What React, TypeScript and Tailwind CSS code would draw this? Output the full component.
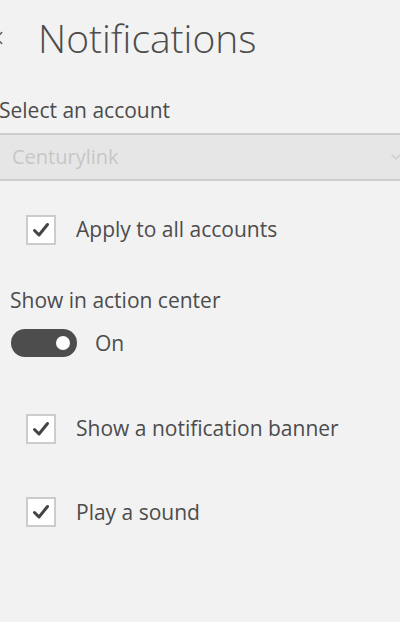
import { ChevronDown, ChevronLeft } from 'lucide-react';

function CheckRow({ label, className }: { label: string; className?: string }) {
  return (
    <div className={`flex items-center ${className ?? ''}`}>
      <div className="ml-[26px] flex h-[30px] w-[30px] items-center justify-center border-2 border-[#cccccc] bg-white">
        <svg viewBox="0 0 20 20" className="h-[20px] w-[20px]" fill="none">
          <path d="M3.5 10.5 L8 15 L16.5 4.5" stroke="#444444" strokeWidth="3" strokeLinecap="round" strokeLinejoin="round" />
        </svg>
      </div>
      <span className="ml-[20px] text-[21px] text-[#4c4c4c]">{label}</span>
    </div>
  );
}

export default function App() {
  return (
    <div
      className="h-[622px] w-[400px] overflow-hidden bg-[#f2f2f2]"
      style={{ fontFamily: '"Open Sans", "Noto Sans", sans-serif' }}
    >
      <div className="flex items-center pt-[8px]">
        <ChevronLeft className="ml-[-12px] h-[22px] w-[22px] text-[#555555]" strokeWidth={1.5} />
        <h1 className="ml-[28px] text-[39px] font-light leading-[60px] text-[#4c4c4c]">Notifications</h1>
      </div>

      <div className="mt-[28px] ml-[-1px] text-[21px] leading-[28px] text-[#4c4c4c]">Select an account</div>

      <div className="mt-[9px] ml-[-4px] flex h-[48px] w-[412px] items-center justify-between border-2 border-[#cccccc] bg-[#e6e6e6] pl-[14px] pr-[2px]">
        <span className="text-[20px] text-[#c6c6c6]">Centurylink</span>
        <ChevronDown className="h-[16px] w-[16px] text-[#cccccc]" />
      </div>

      <CheckRow label="Apply to all accounts" className="mt-[33px]" />

      <div className="mt-[40px] ml-[10px] text-[21px] leading-[28px] text-[#4c4c4c]">Show in action center</div>

      <div className="mt-[14px] flex items-center">
        <div className="ml-[11px] flex h-[28px] w-[66px] items-center justify-end rounded-full bg-[#4d4d4d] pr-[7px]">
          <div className="h-[14px] w-[14px] rounded-full bg-white" />
        </div>
        <span className="ml-[18px] text-[21px] text-[#4c4c4c]">On</span>
      </div>

      <CheckRow label="Show a notification banner" className="mt-[54px]" />
      <CheckRow label="Play a sound" className="mt-[52px]" />
    </div>
  );
}
